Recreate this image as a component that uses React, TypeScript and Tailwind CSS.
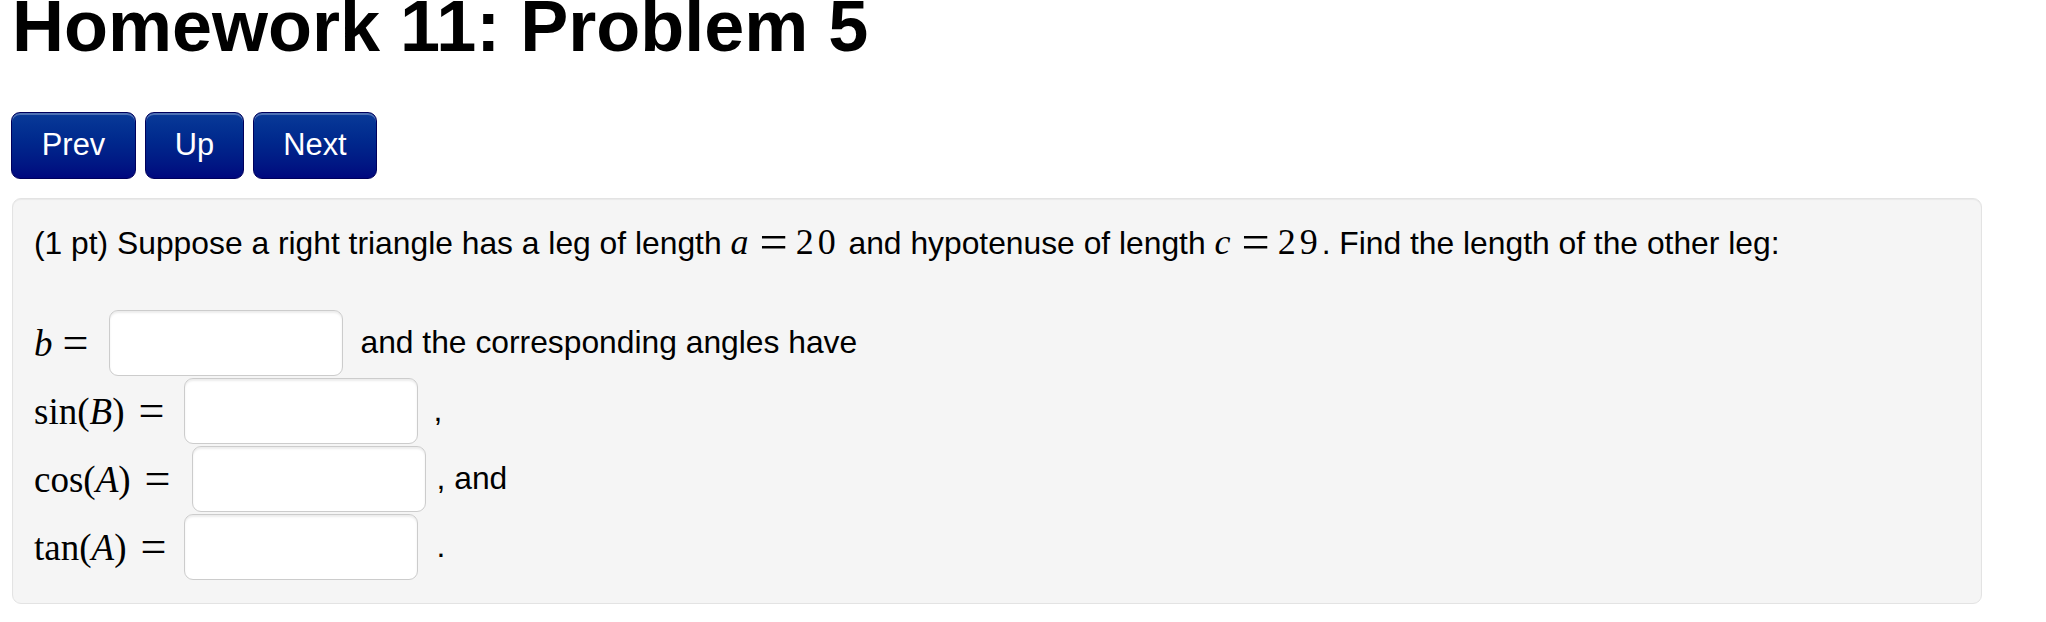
const NAV = [
  { label: 'Prev', width: 'w-[125px]' },
  { label: 'Up', width: 'w-[99px]' },
  { label: 'Next', width: 'w-[124px]' },
];

const ROWS = [
  { fn: 'sin', arg: 'B', labelGap: 'ml-[20px]', tail: ',', tailGap: 'ml-[15px]' },
  { fn: 'cos', arg: 'A', labelGap: 'ml-[21px]', tail: ', and', tailGap: 'ml-[11px]' },
  { fn: 'tan', arg: 'A', labelGap: 'ml-[18px]', tail: '.', tailGap: 'ml-[18px]' },
];

const serif = "font-['Liberation_Serif',serif]";

function AnswerBox({ className = '' }: { className?: string }) {
  return (
    <input
      type="text"
      className={`h-[66px] w-[234px] rounded-[9px] border border-[#cccccc] bg-white shadow-[inset_0_2px_2px_rgba(0,0,0,0.075)] outline-none ${className}`}
    />
  );
}

function Eq({ className = '' }: { className?: string }) {
  return <span className={`${serif} ${className}`}>=</span>;
}

export default function App() {
  return (
    <div className="min-h-screen bg-white font-['Liberation_Sans',Helvetica,Arial,sans-serif] text-black">
      <h1 className="pl-[12px] text-[72px] font-bold leading-[52px]">Homework 11: Problem 5</h1>

      <div className="ml-[11px] mt-[60px] flex gap-[9px]">
        {NAV.map((b) => (
          <button
            key={b.label}
            className={`${b.width} h-[67px] rounded-[9px] border border-[#00005c] bg-gradient-to-b from-[#0a3a98] to-[#00077e] text-[30.8px] text-white shadow-[inset_0_2px_0_rgba(255,255,255,0.28)]`}
          >
            {b.label}
          </button>
        ))}
      </div>

      <div className="ml-[12px] mt-[19px] h-[406px] w-[1970px] rounded-[9px] border border-[#e3e3e3] bg-[#f5f5f5] pl-[21px] pt-[22px] text-[31.8px] shadow-[inset_0_1px_1px_rgba(0,0,0,0.05)]">
        {/* problem statement, inline math set in serif */}
        <p className="flex items-baseline leading-[44px]">
          <span className="whitespace-pre">(1 pt) Suppose a right triangle has a leg of length </span>
          <span className={`${serif} text-[36px] italic leading-[30px]`}>a</span>
          <Eq className="ml-[11px] translate-y-[5px] text-[50px] leading-[30px]" />
          <span className={`${serif} ml-[8px] text-[36px] tracking-[4px] leading-[30px]`}>20</span>
          <span className="whitespace-pre"> and hypotenuse of length </span>
          <span className={`${serif} text-[36px] italic leading-[30px]`}>c</span>
          <Eq className="ml-[11px] translate-y-[5px] text-[50px] leading-[30px]" />
          <span className={`${serif} ml-[8px] text-[36px] tracking-[4px] leading-[30px]`}>29</span>
          <span className="whitespace-pre">. Find the length of the other leg:</span>
        </p>

        <div className="mt-[45px] flex flex-col gap-[2px]">
          <div className="flex items-center">
            <span className={`${serif} text-[37px] italic leading-none`}>b</span>
            <Eq className="ml-[10px] text-[46px] leading-none" />
            <AnswerBox className="ml-[21px]" />
            <span className="ml-[17px]">and the corresponding angles have</span>
          </div>
          {ROWS.map((r) => (
            <div key={r.fn} className="flex items-center">
              <span className={`${serif} text-[37px] leading-none`}>
                {r.fn}(<i>{r.arg}</i>)
              </span>
              <Eq className="ml-[14px] text-[46px] leading-none" />
              <AnswerBox className={r.labelGap} />
              <span className={r.tailGap}>{r.tail}</span>
            </div>
          ))}
        </div>
      </div>
    </div>
  );
}
